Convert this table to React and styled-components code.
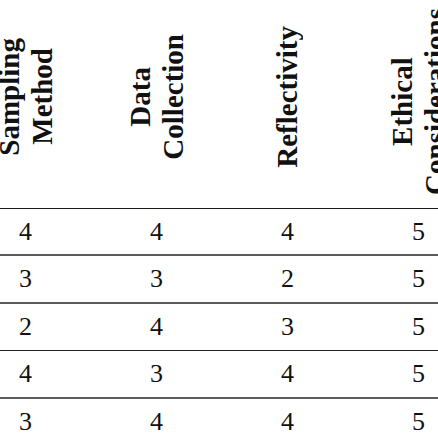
import React from "react";
import styled, { createGlobalStyle } from "styled-components";

const Global = createGlobalStyle`
  html, body {
    margin: 0;
    padding: 0;
    background: #ffffff;
    overflow: hidden;
  }
  body {
    font-family: "Liberation Serif", "Times New Roman", serif;
    color: #111111;
  }
`;

const Table = styled.div`
  display: flex;
  flex-direction: column;
  width: 524px;
  margin-left: -40px;
`;

const HeaderRow = styled.div`
  display: grid;
  grid-template-columns: repeat(4, 131px);
  height: 209px;
  box-sizing: border-box;
  padding-bottom: 14px;
  border-bottom: 1px solid #1a1a1a;
`;

const HeaderCell = styled.div`
  display: flex;
  align-items: center;
  justify-content: center;
  transform: translateY(${(p) => p.$shift || 0}px);
`;

const HeaderLabel = styled.div`
  writing-mode: vertical-rl;
  transform: rotate(180deg);
  text-align: center;
  font-weight: 700;
  font-size: 29px;
  line-height: 33px;
  white-space: nowrap;
`;

const Row = styled.div`
  display: grid;
  grid-template-columns: repeat(4, 131px);
  height: 47.4px;
  box-sizing: border-box;
  border-bottom: ${(p) => (p.$thick ? "2px solid #5c5c5c" : "1px solid #222222")};
`;

const Cell = styled.div`
  display: flex;
  align-items: center;
  justify-content: center;
  font-size: 26px;
  line-height: 1;
`;

const headers = [
  ["Sampling", "Method"],
  ["Data", "Collection"],
  ["Reflectivity"],
  ["Ethical", "Considerations"],
];

const rows = [
  { values: [4, 4, 4, 5], thick: true },
  { values: [3, 3, 2, 5], thick: true },
  { values: [2, 4, 3, 5], thick: false },
  { values: [4, 3, 4, 5], thick: true },
  { values: [3, 4, 4, 5], thick: false },
];

export default function App() {
  return (
    <>
      <Global />
      <Table>
        <HeaderRow>
          {headers.map((lines, i) => (
            <HeaderCell key={i} $shift={i === 3 ? 4 : 0}>
              <HeaderLabel>
                {lines.map((l, j) => (
                  <React.Fragment key={j}>
                    {j > 0 && <br />}
                    {l}
                  </React.Fragment>
                ))}
              </HeaderLabel>
            </HeaderCell>
          ))}
        </HeaderRow>
        {rows.map((r, i) => (
          <Row key={i} $thick={r.thick}>
            {r.values.map((v, j) => (
              <Cell key={j}>{v}</Cell>
            ))}
          </Row>
        ))}
      </Table>
    </>
  );
}
